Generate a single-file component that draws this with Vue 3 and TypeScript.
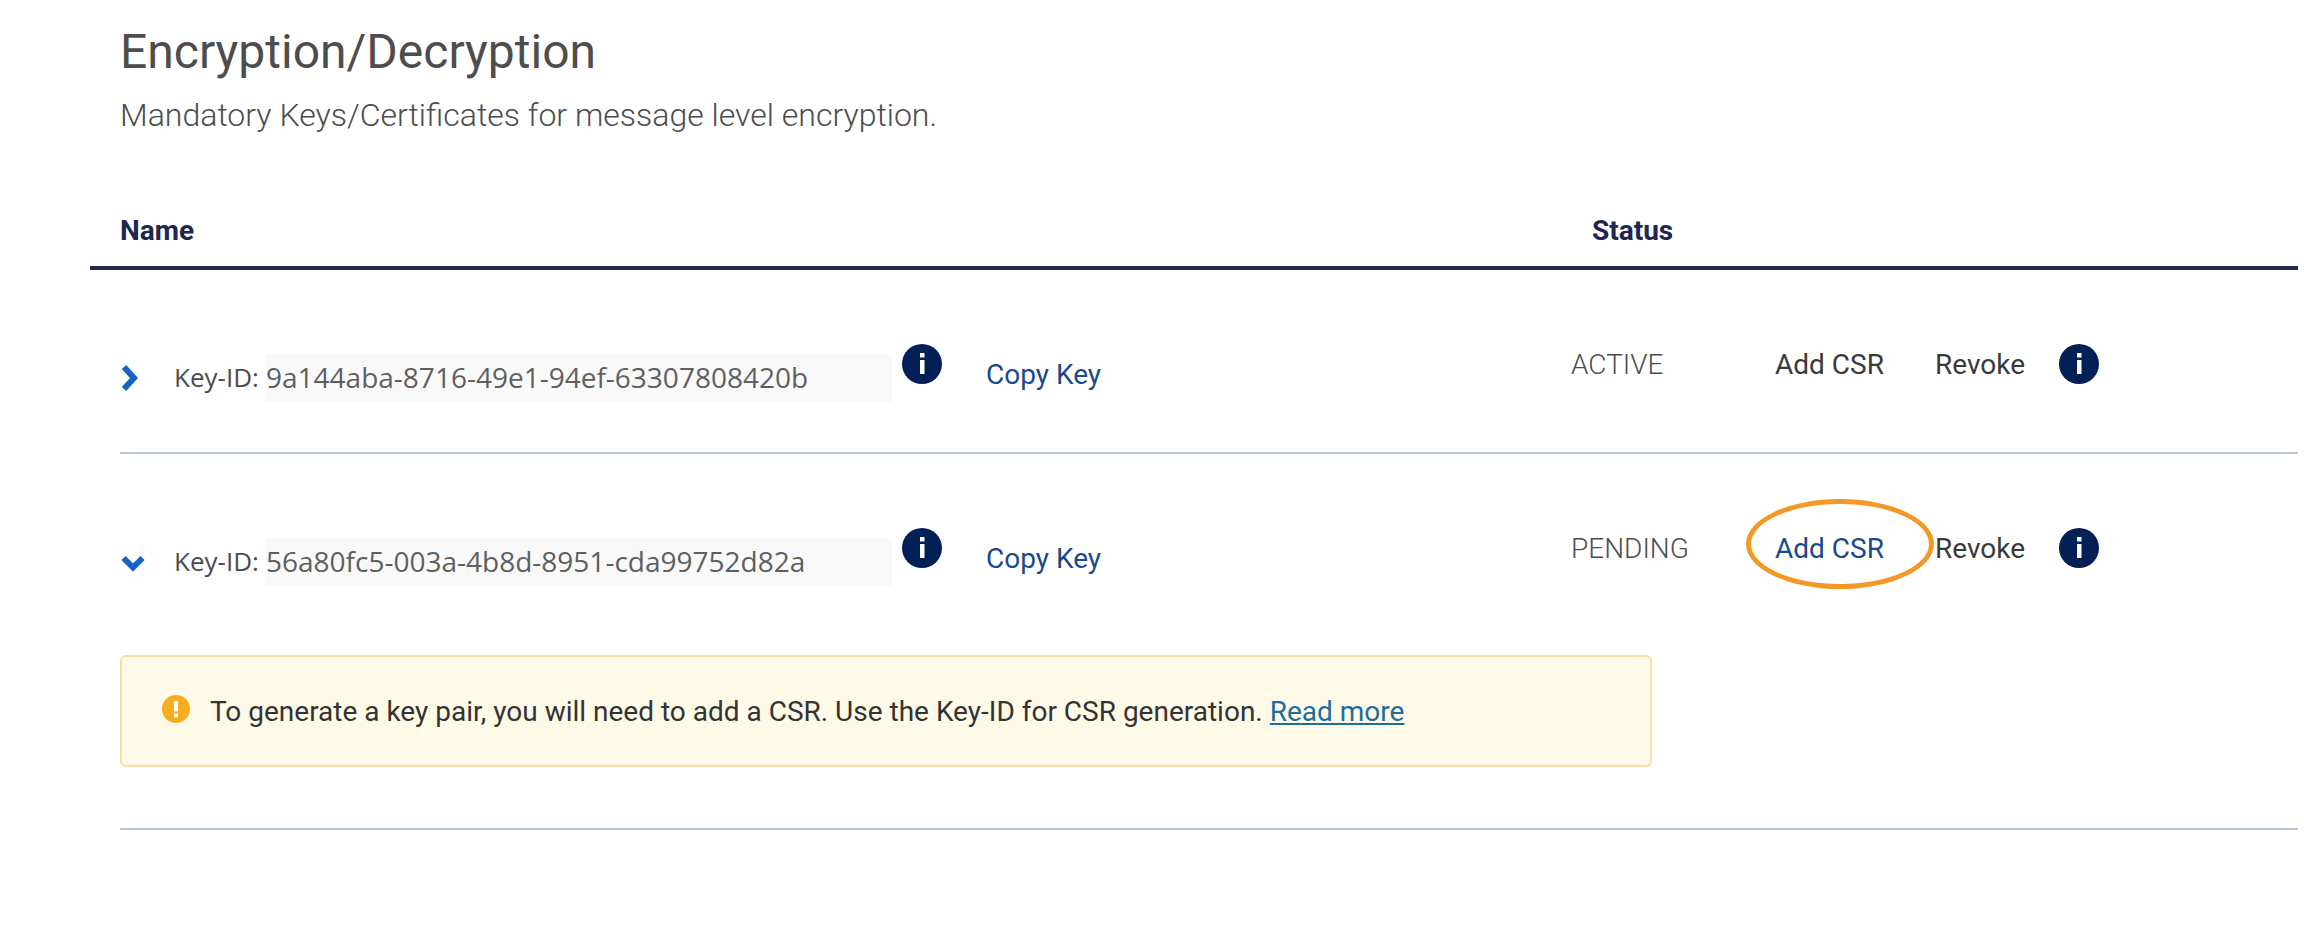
<template>
  <div class="page">
    <h1 class="title">Encryption/Decryption</h1>
    <p class="subtitle">Mandatory Keys/Certificates for message level encryption.</p>

    <div class="table-head">
      <span class="col-name">Name</span>
      <span class="col-status">Status</span>
    </div>

    <div v-for="row in rows" :key="row.id" class="row" :class="{ open: row.open }">
      <div class="row-main">
        <div class="name-cell">
          <span class="chevron">
            <svg v-if="row.open" width="26" height="18" viewBox="0 0 26 18">
              <path d="M3.5 4 L13 13.5 L22.5 4" fill="none" stroke="#1565c0" stroke-width="6" />
            </svg>
            <svg v-else width="18" height="26" viewBox="0 0 18 26">
              <path d="M4 2 L14 13 L4 24" fill="none" stroke="#1565c0" stroke-width="6" />
            </svg>
          </span>
          <span class="key-label">Key-ID:</span>
          <span class="key-value">{{ row.id }}</span>
          <svg class="info" width="40" height="40" viewBox="0 0 40 40">
            <circle cx="20" cy="20" r="20" fill="#021f56" />
            <rect x="18" y="9" width="4.5" height="4.5" fill="#fff" />
            <rect x="18" y="16" width="4.5" height="14" fill="#fff" />
          </svg>
          <a class="copy">Copy Key</a>
        </div>
        <div class="status-cell">
          <span class="status">{{ row.status }}</span>
          <span class="action add" :class="{ highlighted: row.open }">
            Add CSR
            <span v-if="row.open" class="ring"></span>
          </span>
          <span class="action revoke">Revoke</span>
          <svg class="info" width="40" height="40" viewBox="0 0 40 40">
            <circle cx="20" cy="20" r="20" fill="#021f56" />
            <rect x="18" y="9" width="4.5" height="4.5" fill="#fff" />
            <rect x="18" y="16" width="4.5" height="14" fill="#fff" />
          </svg>
        </div>
      </div>

      <div v-if="row.open" class="alert">
        <svg class="alert-icon" width="28" height="28" viewBox="0 0 28 28">
          <circle cx="14" cy="14" r="14" fill="#f5ae1f" />
          <rect x="12" y="6" width="4" height="10.5" fill="#fff" />
          <rect x="12" y="18.5" width="4" height="4" fill="#fff" />
        </svg>
        <span>To generate a key pair, you will need to add a CSR. Use the Key-ID for CSR generation.</span>
        <a class="read-more">Read more</a>
      </div>
    </div>
  </div>
</template>

<script setup lang="ts">
interface KeyRow {
  id: string;
  status: string;
  open: boolean;
}

const rows: KeyRow[] = [
  { id: '9a144aba-8716-49e1-94ef-63307808420b', status: 'ACTIVE', open: false },
  { id: '56a80fc5-003a-4b8d-8951-cda99752d82a', status: 'PENDING', open: true }
];
</script>

<style scoped>
.page {
  width: 2304px;
  height: 926px;
  overflow: hidden;
  background: #fff;
  font-family: Roboto, 'Liberation Sans', sans-serif;
  color: #333;
}

.title {
  margin: 0;
  padding: 24px 0 0 120px;
  font-size: 48px;
  line-height: 56px;
  font-weight: 400;
  color: #4d4d4d;
}

.subtitle {
  margin: 0;
  padding: 16px 0 0 120px;
  font-size: 32px;
  line-height: 38px;
  font-weight: 300;
  color: #4d4d4d;
}

.table-head {
  display: flex;
  margin: 72px 6px 0 90px;
  padding-top: 10px;
  height: 50px;
  border-bottom: 4px solid #232a52;
  font-size: 28px;
  line-height: 30px;
  font-weight: 700;
  color: #1f2650;
}

.col-name {
  margin-left: 30px;
  width: 1472px;
}

.row {
  margin: 0 6px 0 120px;
  height: 184px;
  padding-top: 73px;
  box-sizing: border-box;
  border-bottom: 2px solid #b8c7d9;
}

.row.open {
  height: 376px;
}

.row-main {
  display: flex;
}

.name-cell {
  display: flex;
  align-items: flex-start;
  width: 1451px;
}

.chevron {
  width: 54px;
  margin-top: 22px;
  line-height: 0;
}

.open .chevron {
  margin-top: 27px;
}

.key-label {
  width: 92px;
  margin-top: 10px;
  font-family: 'Open Sans', sans-serif;
  font-size: 26px;
  line-height: 48px;
  color: #4d4d4d;
}

.key-value {
  width: 626px;
  height: 48px;
  margin-top: 11px;
  background: #f9f9f9;
  font-family: 'Open Sans', sans-serif;
  font-size: 28px;
  line-height: 46px;
  color: #5f5f5f;
}

.name-cell .info {
  margin: 1px 0 0 10px;
}

.copy {
  margin: 16px 0 0 44px;
  font-size: 28px;
  line-height: 32px;
  color: #1a4a8a;
}

.status-cell {
  display: flex;
  align-items: flex-start;
  margin-top: 1px;
  font-size: 28px;
  line-height: 40px;
}

.status {
  width: 204px;
  padding-top: 1px;
  color: #4d4d4d;
  font-weight: 300;
}

.action {
  position: relative;
  padding-top: 1px;
  color: #3a3a3a;
}

.add {
  width: 160px;
}

.add.highlighted {
  color: #1a4a8a;
}

.revoke {
  width: 124px;
}

.ring {
  position: absolute;
  left: -29px;
  top: -29px;
  width: 188px;
  height: 90px;
  box-sizing: border-box;
  border: 5px solid #f39a26;
  border-radius: 50%;
}

.alert {
  display: flex;
  align-items: center;
  width: 1532px;
  height: 112px;
  box-sizing: border-box;
  margin-top: 69px;
  padding-left: 40px;
  background: #fff9e8;
  border: 2px solid #f5dfa6;
  border-radius: 6px;
  font-size: 28px;
  color: #333;
}

.alert-icon {
  margin: -4px 20px 0 0;
}

.read-more {
  margin-left: 7px;
  color: #1d6d9e;
  text-decoration: underline;
}
</style>

<style>
html,
body {
  margin: 0;
  background: #fff;
}
</style>
